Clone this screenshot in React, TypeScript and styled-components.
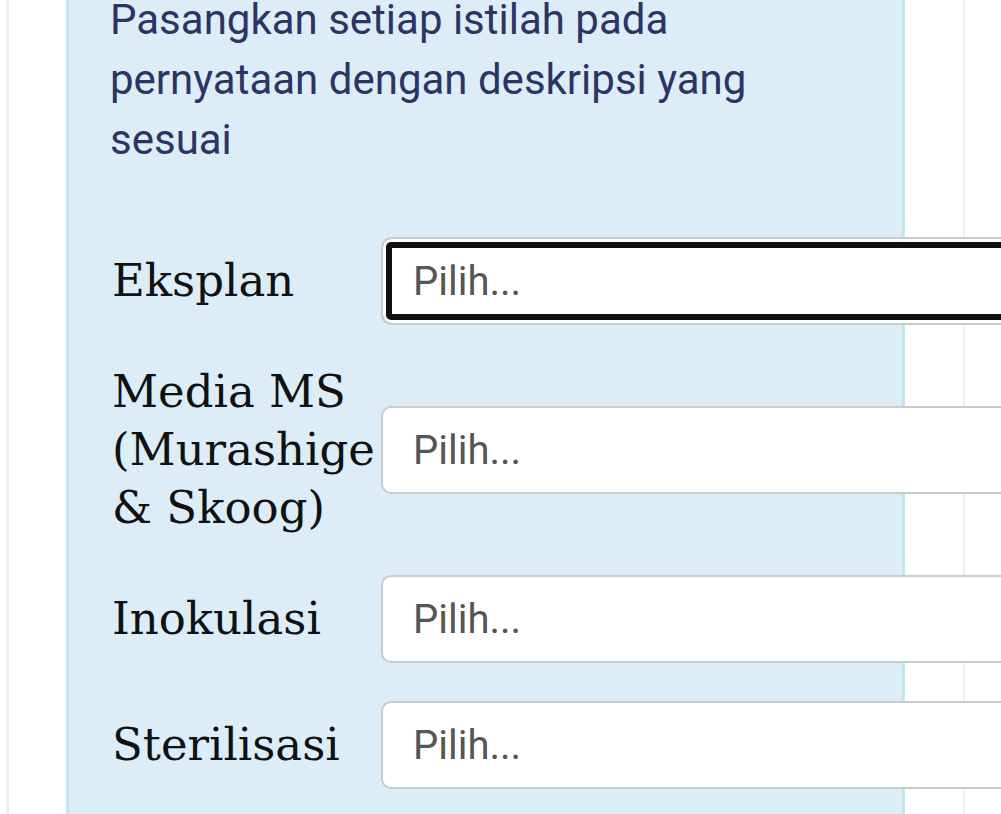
import React from 'react';
import styled, { createGlobalStyle } from 'styled-components';

const GlobalStyle = createGlobalStyle`
  html, body {
    margin: 0;
    padding: 0;
    background: #fff;
    overflow: hidden;
  }
`;

const Frame = styled.div`
  margin-left: 6px;
  width: 897px;
  min-height: 814px;
  border-left: 3px solid #efefef;
  border-right: 2px solid #efefef;
  padding-left: 57px;
`;

const Panel = styled.section`
  width: 839px;
  min-height: 830px;
  background: #ddedf7;
  border-left: 3px solid #bfe7ef;
  border-right: 3px solid #bfe7ef;
  padding-left: 41px;
  box-sizing: border-box;
`;

const Prompt = styled.p`
  margin: -10px 0 0;
  width: 680px;
  font-family: Roboto, 'Noto Sans', sans-serif;
  font-size: 42px;
  line-height: 60px;
  color: #2d3465;
`;

const MatchList = styled.div`
  margin-top: 48px;
`;

const MatchRow = styled.div`
  display: grid;
  grid-template-columns: 271px 1fr;
  align-items: center;
  padding: 19px 0;
`;

const Term = styled.label`
  padding-left: 2px;
  font-family: 'DejaVu Serif', 'Liberation Serif', serif;
  font-size: 45px;
  line-height: 58px;
  color: #111;
`;

const Choice = styled.div<{ $focused?: boolean }>`
  display: flex;
  align-items: center;
  box-sizing: border-box;
  width: 700px;
  height: 88px;
  padding-left: 30px;
  background: #fff;
  border: 2px solid #c9cbcc;
  border-radius: 10px;
  font-family: Roboto, 'Noto Sans', sans-serif;
  font-size: 40px;
  color: #555;
  box-shadow: ${(p) =>
    p.$focused ? 'inset 0 0 0 3px #fff, inset 0 0 0 9px #111' : 'none'};
`;

const terms = ['Eksplan', 'Media MS (Murashige & Skoog)', 'Inokulasi', 'Sterilisasi'];

const App: React.FC = function() {
  return (
    <>
      <GlobalStyle />
      <Frame>
        <Panel>
          <Prompt>Pasangkan setiap istilah pada pernyataan dengan deskripsi yang sesuai</Prompt>
          <MatchList>
            {terms.map((term, i) => (
              <MatchRow key={term}>
                <Term>{term}</Term>
                <Choice $focused={i === 0}>Pilih...</Choice>
              </MatchRow>
            ))}
          </MatchList>
        </Panel>
      </Frame>
    </>
  );
};

export default App;
